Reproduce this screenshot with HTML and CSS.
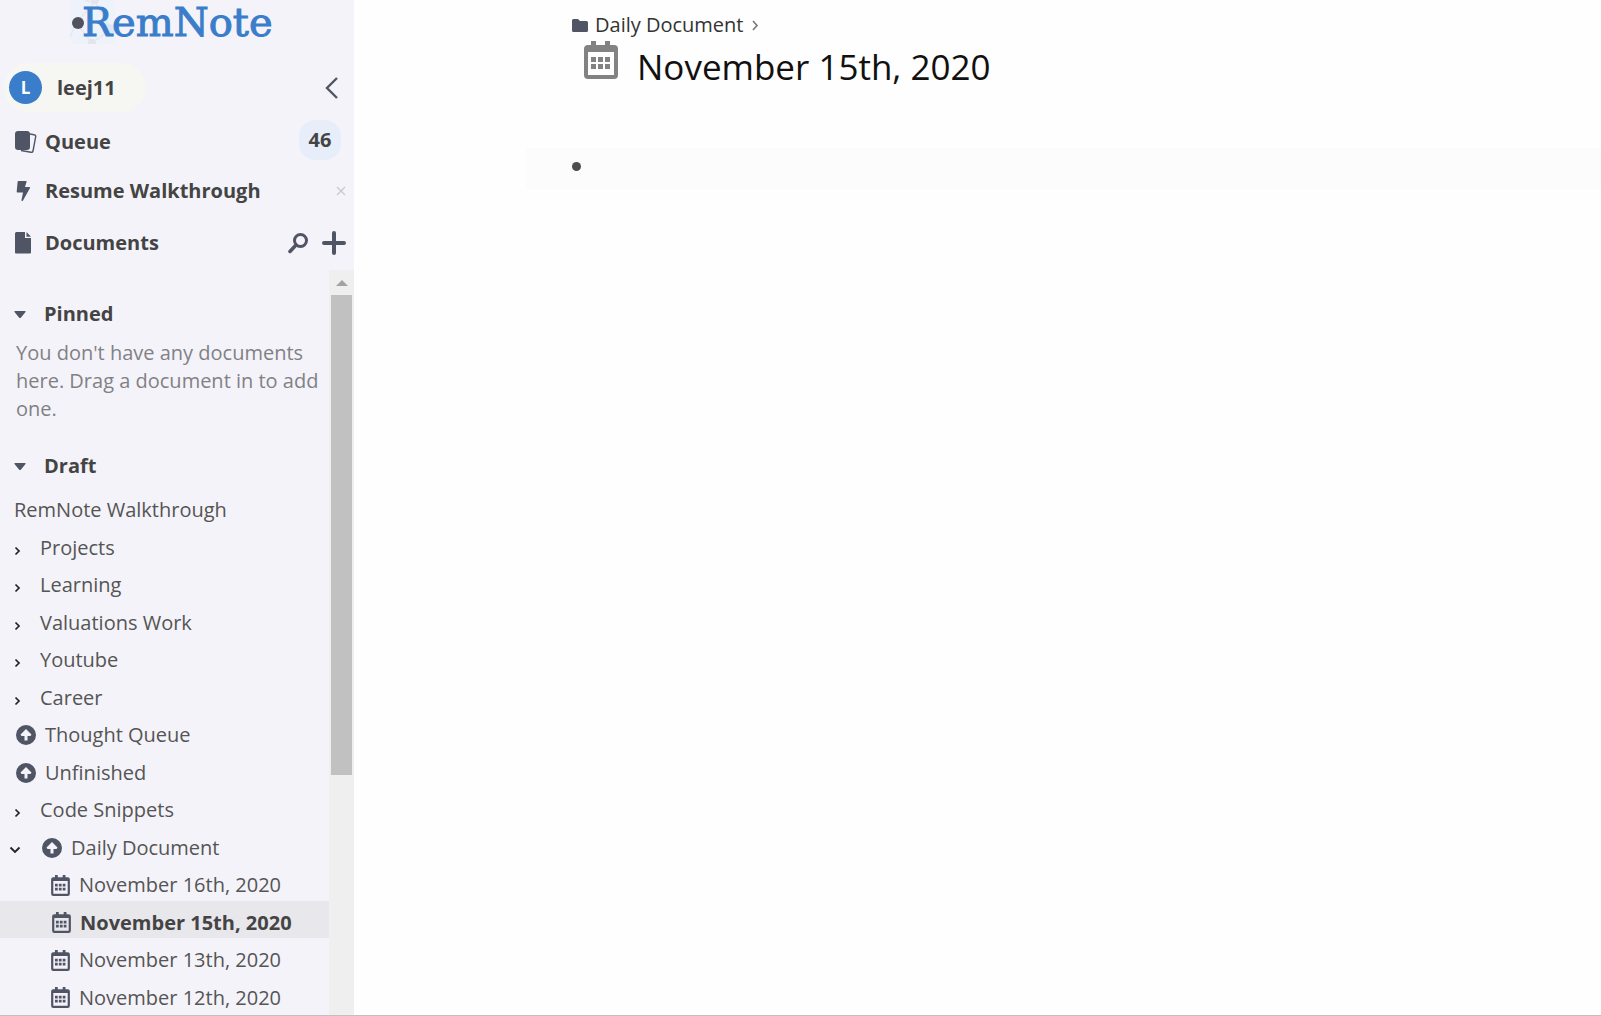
FILE: index.html
```html
<!doctype html>
<html lang="en">
<head>
    <meta charset="utf-8">
    <title>RemNote</title>
    <link rel="stylesheet" href="styles.css">
</head>
<body>
    <svg class="sprite" aria-hidden="true">
        <symbol id="calendar" viewBox="0 0 34 38">
            <path fill-rule="evenodd" d="M7 0h5v4h9V0h5v4h4a4 4 0 0 1 4 4v26a4 4 0 0 1-4 4H4a4 4 0 0 1-4-4V8a4 4 0 0 1 4-4h3zM4 11v23h26V11z"/>
            <path d="M7 16h5v5H7zM14 16h5v5h-5zM21 16h5v5h-5zM7 23h5v5H7zM14 23h5v5h-5zM21 23h5v5h-5z"/>
        </symbol>
        <symbol id="up" viewBox="0 0 20 20">
            <path fill-rule="evenodd" d="M10 0a10 10 0 1 1 0 20 10 10 0 0 1 0-20zm0 4L4.500 9.500l1 1.500H8.500v4.500h3V11h3l1-1.500z"/>
        </symbol>
        <symbol id="right" viewBox="0 0 8 10">
            <path d="M1.500 1.500L5 5 1.500 8.500" fill="none" stroke="currentColor" stroke-width="1.700"/>
        </symbol>
        <symbol id="caret" viewBox="0 0 12 7">
            <path d="M1 0h10q1 0 .5 1L7 6.500q-1 1-2 0L.5 1Q0 0 1 0z"/>
        </symbol>
    </svg>
    <div class="app">
        <nav class="sidebar">
            <a class="logo" href="#">
                <svg class="logo-mark" viewBox="0 0 45 44" aria-hidden="true">
                    <rect width="45" height="44" rx="5" fill="#eef2fa"/>
                    <path d="M25 2L6 23l16 20 19-14M6 23L0 37M25 2l16 27M15 0l9 3" fill="none" stroke="#e5e8ee" stroke-width="1.500"/>
                    <circle cx="25" cy="0" r="4" fill="#e2e5eb"/>
                    <circle cx="22" cy="43" r="4" fill="#e2e5eb"/>
                    <circle cx="39" cy="30" r="6" fill="#dde6f4"/>
                    <circle cx="8" cy="23" r="6" fill="#51525e"/>
                </svg>
                <span class="logo-text">RemNote</span>
            </a>
            <div class="user-row">
                <button class="user"><span class="avatar">L</span>leej11</button>
                <button class="icon-button" aria-label="Collapse sidebar">
                    <svg width="13" height="22" viewBox="0 0 13 22"><path d="M12 1L2 11l10 10" fill="none" stroke="currentColor" stroke-width="2.400"/></svg>
                </button>
            </div>
            <div class="menu-row">
                <a class="menu-link" href="#">
                    <svg width="22" height="24" viewBox="0 0 22 24"><path d="M15 4l4 .7q2 .3 1.700 2L18 21q-.3 1.600-2 1.300L6 20.500" fill="none" stroke="currentColor" stroke-width="1.400"/><rect y="1" width="15" height="19" rx="3"/></svg>
                    Queue
                </a>
                <span class="badge">46</span>
            </div>
            <div class="menu-row menu-row-walk">
                <a class="menu-link" href="#">
                    <svg width="22" height="22" viewBox="0 0 22 22"><path d="M3.500 1h7.500q.8 0 .6.800L10 7h4.500q1 0 .5 1L8 20.500q-1.500 1.500-1.500-.5L8 12.500H2.500q-1 0-.8-1L2.600 2q0-1 .9-1z"/></svg>
                    Resume Walkthrough
                </a>
                <button class="icon-button dismiss" aria-label="Dismiss">
                    <svg width="10" height="10" viewBox="0 0 10 10"><path d="M1 1l8 8M9 1L1 9" fill="none" stroke="currentColor" stroke-width="1.200"/></svg>
                </button>
            </div>
            <div class="menu-row menu-row-docs">
                <a class="menu-link" href="#">
                    <svg width="22" height="22" viewBox="0 0 22 22"><path d="M1.500 0H10v6h6v14.500q0 1-1 1H1q-1 0-1-1V1.500Q0 0 1.500 0zM11.500 0L16 4.700H11.500z"/></svg>
                    Documents
                </a>
                <button class="icon-button" aria-label="Search">
                    <svg width="20" height="22" viewBox="0 0 20 22"><g fill="none" stroke="currentColor"><circle cx="12.500" cy="8.500" r="6" stroke-width="3"/><path d="M8 13l-6 6.500" stroke-width="3.500" stroke-linecap="round"/></g></svg>
                </button>
                <button class="icon-button" aria-label="New document">
                    <svg width="24" height="24" viewBox="0 0 24 24"><path d="M12 2v20M2 12h20" fill="none" stroke="currentColor" stroke-width="4" stroke-linecap="round"/></svg>
                </button>
            </div>
            <div class="documents">
                <div class="panes">
                    <button class="section"><svg width="12" height="7"><use href="#caret"/></svg>Pinned</button>
                    <p class="empty">You don't have any documents here. Drag a document in to add one.</p>
                    <button class="section"><svg width="12" height="7"><use href="#caret"/></svg>Draft</button>
                    <ul class="tree">
                        <li><a href="#">RemNote Walkthrough</a></li>
                        <li class="folder"><svg class="arrow"><use href="#right"/></svg><a href="#">Projects</a></li>
                        <li class="folder"><svg class="arrow"><use href="#right"/></svg><a href="#">Learning</a></li>
                        <li class="folder"><svg class="arrow"><use href="#right"/></svg><a href="#">Valuations Work</a></li>
                        <li class="folder"><svg class="arrow"><use href="#right"/></svg><a href="#">Youtube</a></li>
                        <li class="folder"><svg class="arrow"><use href="#right"/></svg><a href="#">Career</a></li>
                        <li class="upload"><svg class="up"><use href="#up"/></svg><a href="#">Thought Queue</a></li>
                        <li class="upload"><svg class="up"><use href="#up"/></svg><a href="#">Unfinished</a></li>
                        <li class="folder"><svg class="arrow"><use href="#right"/></svg><a href="#">Code Snippets</a></li>
                        <li class="upload open"><svg class="arrow-down" viewBox="0 0 12 10"><path d="M1.500 2.500L6 7l4.500-4.500" fill="none" stroke="currentColor" stroke-width="1.800"/></svg><svg class="up"><use href="#up"/></svg><a href="#">Daily Document</a></li>
                        <li class="day"><svg class="cal"><use href="#calendar"/></svg><a href="#">November 16th, 2020</a></li>
                        <li class="day current"><svg class="cal"><use href="#calendar"/></svg><a href="#">November 15th, 2020</a></li>
                        <li class="day"><svg class="cal"><use href="#calendar"/></svg><a href="#">November 13th, 2020</a></li>
                        <li class="day"><svg class="cal"><use href="#calendar"/></svg><a href="#">November 12th, 2020</a></li>
                    </ul>
                </div>
                <div class="scrollbar">
                    <div class="scroll-up"></div>
                    <div class="scroll-track"><div class="scroll-thumb"></div></div>
                </div>
            </div>
        </nav>
        <main class="page">
            <div class="breadcrumb">
                <svg width="16" height="13" viewBox="0 0 16 13"><path d="M1.500 0H6l2 2h6.500Q16 2 16 3.500v8q0 1.500-1.500 1.500h-13Q0 13 0 11.500v-10Q0 0 1.500 0z"/></svg>
                <a href="#">Daily Document</a>
                <svg class="crumb-arrow" width="7" height="11" viewBox="0 0 7 11"><path d="M1 1l4 4.500L1 10" fill="none" stroke="currentColor" stroke-width="1.600"/></svg>
            </div>
            <div class="title">
                <svg width="34" height="38"><use href="#calendar"/></svg>
                <h1>November 15th, 2020</h1>
            </div>
            <div class="rem">
                <span class="bullet"></span>
                <input type="text" aria-label="Rem text">
            </div>
        </main>
    </div>
</body>
</html>
```
FILE: styles.css
```css
* {box-sizing: border-box;}
body {margin: 0; font: 20px/28px "Open Sans", "Noto Sans", sans-serif; color: #444; background: #fefefe;}
a {color: inherit; text-decoration: none;}
button {border: 0; padding: 0; background: none; font: inherit; font-weight: 700; color: inherit; cursor: pointer;}
svg {flex: none; display: block; fill: currentColor;}
.sprite {position: absolute; width: 0; height: 0;}

.app {display: flex; height: 100vh; border-bottom: 1px solid #c0c0c0;}

/* sidebar */
.sidebar {display: flex; flex-direction: column; flex: none; width: 354px; background: #f4f3f9;}
.sidebar svg {color: #505565;}
.logo {display: grid; grid-template-columns: 12px auto; height: 44px; margin-left: 70px; color: #3a7dca;}
.logo-mark, .logo-text {grid-row: 1;}
.logo-mark {grid-column: 1; width: 45px; height: 44px;}
.logo-text {grid-column: 2; z-index: 1; font: 40px/44px "DejaVu Serif", serif; -webkit-text-stroke: 1px #3a7dca;}
.user-row {display: flex; align-items: center; justify-content: space-between; margin: 19px 16px 5px 4px;}
.user {display: flex; align-items: center; gap: 15px; height: 49px; padding: 0 30px 0 5px; border-radius: 25px; background: #f6f7f3;}
.avatar {width: 33px; height: 33px; border-radius: 50%; background: #3a7dca; color: #fff; font-size: 17px; line-height: 33px;}
.menu-row {display: flex; align-items: center; gap: 14px; height: 50px; padding: 0 8px 0 15px;}
.menu-row-walk {height: 48px;}
.menu-row-docs {height: 55px;}
.menu-link {display: flex; flex: 1; align-items: center; gap: 8px; font-weight: 700;}
.badge {width: 42px; margin: 0 5px 4px 0; border-radius: 16px; background: #e8eef9; font-weight: 700; line-height: 40px; text-align: center;}
.sidebar .dismiss svg {color: #c8c8cc;}

/* document tree */
.documents {display: flex; flex: 1; min-height: 0;}
.panes {display: flex; flex-direction: column; flex: 1; padding-top: 24px;}
.section {display: flex; align-items: center; gap: 18px; height: 40px; padding-left: 14px;}
.empty {margin: 5px 0 23px; padding: 0 8px 0 16px; color: #818185;}
.tree {display: flex; flex: 1; flex-direction: column; margin: 2px 0 0; padding: 0 0 2px; list-style: none; color: #555;}
.tree li {display: flex; flex: 1; align-items: center; padding: 7px 0 0 14px;}
.tree .folder {gap: 18px;}
.tree .upload {gap: 9px; padding-left: 16px;}
.tree .open {padding-left: 9px;}
.tree .day {gap: 9px; padding-left: 51px;}
.tree .current {padding-left: 52px; background: #e8e7ec; color: #444; font-weight: 700;}
.arrow {width: 8px; height: 10px; margin-top: 6px;}
.sidebar .arrow, .sidebar .arrow-down {color: #222;}
.arrow-down {width: 12px; height: 10px; margin: 4px 12px 0 0;}
.up {width: 20px; height: 20px;}
.cal {width: 19px; height: 21px;}

.scrollbar {display: flex; flex-direction: column; width: 25px; padding: 0 2px; background: #efefef;}
.scroll-up {height: 25px; display: grid; place-items: center;}
.scroll-up::before {content: ""; border: 6px solid transparent; border-top: 0; border-bottom-color: #a3a3a3;}
.scroll-track {flex: 1;}
.scroll-thumb {height: calc(200% / 3); background: #c1c1c1;}

/* page */
.page {flex: 1; min-width: 0; padding: 11px 0 0 172px;}
.breadcrumb {display: flex; align-items: center; gap: 7px; padding-left: 46px; color: #333;}
.breadcrumb svg {color: #505565;}
.breadcrumb .crumb-arrow {margin-left: 2px; color: #777;}
.title {display: flex; gap: 19px; height: 76px; padding: 2px 0 0 58px; color: #828282;}
h1 {margin: 0; color: #111; font-size: 35px; font-weight: 400; line-height: 52px;}
.rem {display: flex; align-items: center; gap: 12px; height: 41px; margin-top: 33px; padding-left: 46px; background: #fcfcfc;}
.bullet {width: 9px; height: 9px; margin-bottom: 4px; border-radius: 50%; background: #4d4d4f;}
.rem input {flex: 1; border: 0; outline: 0; background: none; font: inherit;}
```
